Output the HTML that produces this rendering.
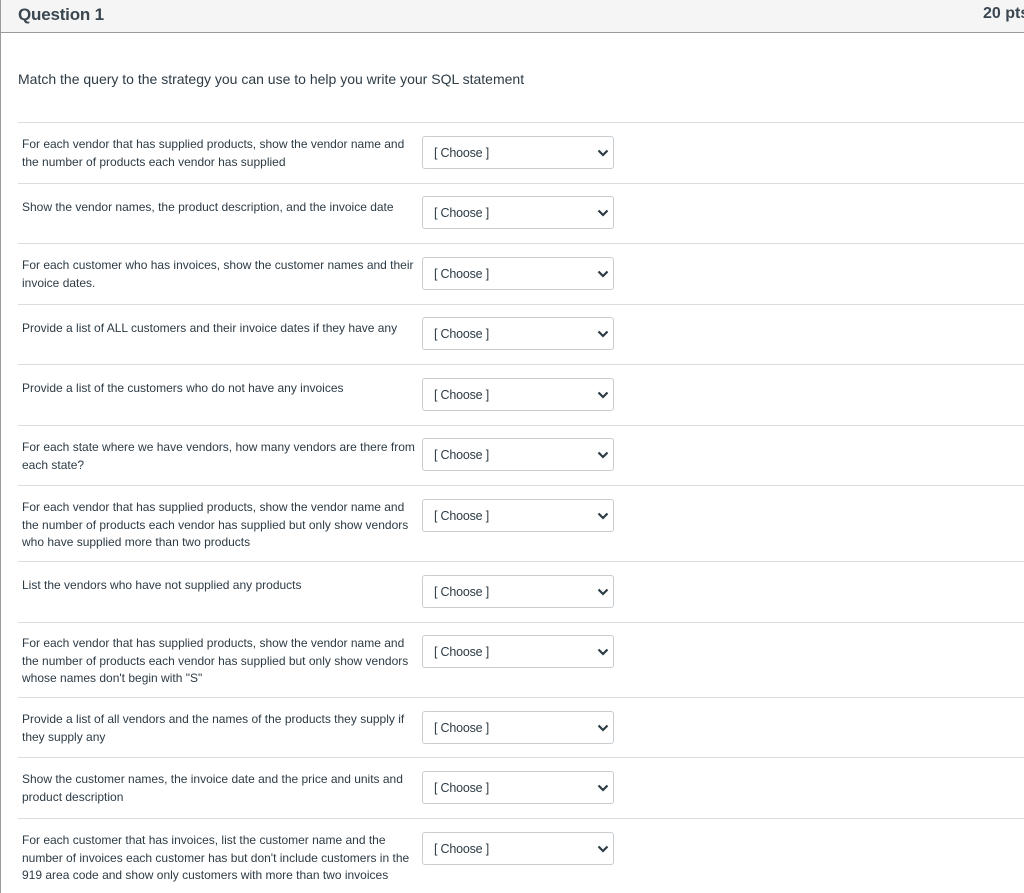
<!DOCTYPE html>
<html><head><style>
body{margin:0;width:1024px;height:893px;overflow:hidden;background:#fff;font-family:"Liberation Sans",sans-serif;color:#2d3b45;position:relative}
.hdr{position:absolute;left:0;top:0;width:1024px;height:32px;background:#f5f5f5;border-bottom:1px solid #9a9a9a}
.lb{position:absolute;left:0;top:0;width:1px;height:893px;background:#9a9a9a}
.t{position:absolute;left:18px;top:5px;font-size:17px;font-weight:bold;color:#3a4650;letter-spacing:-0.2px}
.p{position:absolute;left:983px;top:5px;font-size:16px;font-weight:bold;color:#3a4650;white-space:nowrap}
.ins{position:absolute;left:18px;top:71px;font-size:14px;letter-spacing:0px}
.ln{position:absolute;left:18px;width:1006px;height:1px;background:#dcdcdc}
.q{position:absolute;left:22px;font-size:12px;line-height:17.5px;white-space:nowrap;letter-spacing:0px}
.s{position:absolute;left:422px;width:190px;height:31px;border:1px solid #c7cdd1;border-radius:3px;background:#fff;font-size:12.5px;box-sizing:content-box}
.s span{position:absolute;left:11px;top:9px;letter-spacing:-0.2px}
.s svg{position:absolute;right:4px;top:11px}
</style></head><body>
<div class="hdr"></div><div class="lb"></div>
<div class="t">Question 1</div><div class="p">20 pts</div>
<div class="ins">Match the query to the strategy you can use to help you write your SQL statement</div>

<div class="ln" style="top:122px"></div>
<div class="q" style="top:136px">For each vendor that has supplied products, show the vendor name and<br>the number of products each vendor has supplied</div>
<div class="s" style="top:136px"><span>[ Choose ]</span><svg width="12" height="10" viewBox="0 0 12 10"><path d="M1.5 2.5 L6 7 L10.5 2.5" fill="none" stroke="#2d3b45" stroke-width="2.2"/></svg></div>

<div class="ln" style="top:183px"></div>
<div class="q" style="top:199px">Show the vendor names, the product description, and the invoice date</div>
<div class="s" style="top:196px"><span>[ Choose ]</span><svg width="12" height="10" viewBox="0 0 12 10"><path d="M1.5 2.5 L6 7 L10.5 2.5" fill="none" stroke="#2d3b45" stroke-width="2.2"/></svg></div>

<div class="ln" style="top:243px"></div>
<div class="q" style="top:257px">For each customer who has invoices, show the customer names and their<br>invoice dates.</div>
<div class="s" style="top:257px"><span>[ Choose ]</span><svg width="12" height="10" viewBox="0 0 12 10"><path d="M1.5 2.5 L6 7 L10.5 2.5" fill="none" stroke="#2d3b45" stroke-width="2.2"/></svg></div>

<div class="ln" style="top:304px"></div>
<div class="q" style="top:320px">Provide a list of ALL customers and their invoice dates if they have any</div>
<div class="s" style="top:317px"><span>[ Choose ]</span><svg width="12" height="10" viewBox="0 0 12 10"><path d="M1.5 2.5 L6 7 L10.5 2.5" fill="none" stroke="#2d3b45" stroke-width="2.2"/></svg></div>

<div class="ln" style="top:364px"></div>
<div class="q" style="top:380px">Provide a list of the customers who do not have any invoices</div>
<div class="s" style="top:378px"><span>[ Choose ]</span><svg width="12" height="10" viewBox="0 0 12 10"><path d="M1.5 2.5 L6 7 L10.5 2.5" fill="none" stroke="#2d3b45" stroke-width="2.2"/></svg></div>

<div class="ln" style="top:425px"></div>
<div class="q" style="top:439px">For each state where we have vendors, how many vendors are there from<br>each state?</div>
<div class="s" style="top:438px"><span>[ Choose ]</span><svg width="12" height="10" viewBox="0 0 12 10"><path d="M1.5 2.5 L6 7 L10.5 2.5" fill="none" stroke="#2d3b45" stroke-width="2.2"/></svg></div>

<div class="ln" style="top:485px"></div>
<div class="q" style="top:499px">For each vendor that has supplied products, show the vendor name and<br>the number of products each vendor has supplied but only show vendors<br>who have supplied more than two products</div>
<div class="s" style="top:499px"><span>[ Choose ]</span><svg width="12" height="10" viewBox="0 0 12 10"><path d="M1.5 2.5 L6 7 L10.5 2.5" fill="none" stroke="#2d3b45" stroke-width="2.2"/></svg></div>

<div class="ln" style="top:561px"></div>
<div class="q" style="top:577px">List the vendors who have not supplied any products</div>
<div class="s" style="top:575px"><span>[ Choose ]</span><svg width="12" height="10" viewBox="0 0 12 10"><path d="M1.5 2.5 L6 7 L10.5 2.5" fill="none" stroke="#2d3b45" stroke-width="2.2"/></svg></div>

<div class="ln" style="top:622px"></div>
<div class="q" style="top:635px">For each vendor that has supplied products, show the vendor name and<br>the number of products each vendor has supplied but only show vendors<br>whose names don't begin with "S"</div>
<div class="s" style="top:635px"><span>[ Choose ]</span><svg width="12" height="10" viewBox="0 0 12 10"><path d="M1.5 2.5 L6 7 L10.5 2.5" fill="none" stroke="#2d3b45" stroke-width="2.2"/></svg></div>

<div class="ln" style="top:697px"></div>
<div class="q" style="top:711px">Provide a list of all vendors and the names of the products they supply if<br>they supply any</div>
<div class="s" style="top:711px"><span>[ Choose ]</span><svg width="12" height="10" viewBox="0 0 12 10"><path d="M1.5 2.5 L6 7 L10.5 2.5" fill="none" stroke="#2d3b45" stroke-width="2.2"/></svg></div>

<div class="ln" style="top:757px"></div>
<div class="q" style="top:771px">Show the customer names, the invoice date and the price and units and<br>product description</div>
<div class="s" style="top:771px"><span>[ Choose ]</span><svg width="12" height="10" viewBox="0 0 12 10"><path d="M1.5 2.5 L6 7 L10.5 2.5" fill="none" stroke="#2d3b45" stroke-width="2.2"/></svg></div>

<div class="ln" style="top:818px"></div>
<div class="q" style="top:832px">For each customer that has invoices, list the customer name and the<br>number of invoices each customer has but don't include customers in the<br>919 area code and show only customers with more than two invoices</div>
<div class="s" style="top:832px"><span>[ Choose ]</span><svg width="12" height="10" viewBox="0 0 12 10"><path d="M1.5 2.5 L6 7 L10.5 2.5" fill="none" stroke="#2d3b45" stroke-width="2.2"/></svg></div>
</body></html>
